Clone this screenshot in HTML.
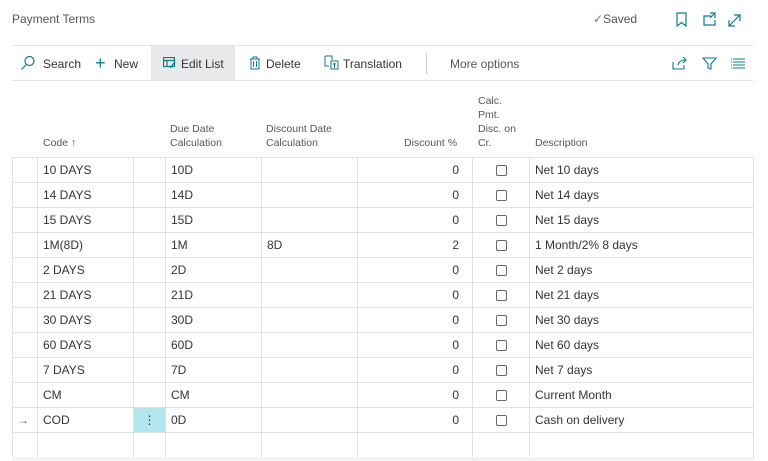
<!DOCTYPE html>
<html><head><meta charset="utf-8"><style>
*{margin:0;padding:0;box-sizing:border-box}
body{width:768px;height:461px;background:#fff;font-family:"Liberation Sans",sans-serif;color:#333;position:relative;overflow:hidden;font-size:12px}
.abs{position:absolute}
.t{position:absolute;white-space:nowrap}
table{position:absolute;left:12px;top:157px;border-collapse:collapse;font-size:12px;color:#333}
td{border:1px solid #e0e0e0;height:25px;padding:0 5px;white-space:nowrap}
td.n{text-align:right;padding-right:13px}
.h{color:#555;font-size:10.5px;line-height:14px}
.cb{display:inline-block;width:11px;height:11px;border:1px solid #666;border-radius:2px;vertical-align:middle}
</style></head><body>
<div class="t" style="left:12px;top:12px;font-size:12px;color:#555">Payment Terms</div>
<div class="t" style="left:593px;top:12px;font-size:12px;color:#555"><span style="color:#777">✓</span>Saved</div>
<svg class="abs" style="left:675px;top:12px" width="80" height="16" viewBox="0 0 80 16" fill="none" stroke="#0f7b8c" stroke-width="1.2">
<path d="M2 1h9v13l-4.5-3.5L2 14z"/>
<path d="M36 4h-7v9h11V8M35 1h5v5M40 1l-5 5"/>
<path d="M54 14L65 3M59 3h6v6M54 8v6h6"/>
</svg>
<div class="abs" style="left:12px;top:45px;width:741px;height:1px;background:#e5e5e5"></div>
<div class="abs" style="left:12px;top:80px;width:741px;height:1px;background:#e5e5e5"></div>
<div class="abs" style="left:151px;top:46px;width:84px;height:34px;background:#e8e9ea"></div>
<div class="abs" style="left:426px;top:53px;width:1px;height:21px;background:#ccc"></div>
<svg class="abs" style="left:20px;top:55px" width="16" height="16" viewBox="0 0 16 16" fill="none" stroke="#0f7b8c" stroke-width="1.2"><circle cx="9.5" cy="6" r="4.5"/><path d="M6.5 9.5L1.5 14.5"/></svg>
<div class="t" style="left:43px;top:57px;font-size:12px">Search</div>
<div class="t" style="left:95px;top:53px;font-size:18px;color:#0f7b8c;line-height:20px;font-weight:300">+</div>
<div class="t" style="left:114px;top:57px;font-size:12px">New</div>
<svg class="abs" style="left:163px;top:57px" width="14" height="12" viewBox="0 0 14 12" fill="none" stroke="#0f7b8c" stroke-width="1.2"><rect x="0.5" y="0.5" width="11" height="9"/><path d="M0.5 3.5h11M4 3.5v6M7 11l5-6"/></svg>
<div class="t" style="left:181px;top:57px;font-size:12px">Edit List</div>
<svg class="abs" style="left:249px;top:56px" width="12" height="14" viewBox="0 0 12 14" fill="none" stroke="#0f7b8c" stroke-width="1"><path d="M1 3h10M4 3V1h4v2M2 3v10h8V3M4.5 5v6M7.5 5v6"/></svg>
<div class="t" style="left:266px;top:57px;font-size:12px">Delete</div>
<svg class="abs" style="left:324px;top:55px" width="15" height="15" viewBox="0 0 15 15" fill="none" stroke="#0f7b8c" stroke-width="1"><path d="M1 1h7v4M1 1v10h4"/><path d="M7 6h7v8H7z"/><path d="M9 9h3M10.5 8v5"/></svg>
<div class="t" style="left:343px;top:57px;font-size:12px">Translation</div>
<div class="t" style="left:450px;top:57px;font-size:12px;color:#555">More options</div>
<svg class="abs" style="left:672px;top:56px" width="75" height="15" viewBox="0 0 75 15" fill="none" stroke="#0f7b8c" stroke-width="1.1">
<path d="M1 6v7h11V9M6 9c1-4 4-5 8-5M11 1l3 3-3 3"/>
<path d="M31 2h13l-5 6v5l-3-1V8z"/>
<path d="M61 3h12M61 6h12M61 9h12M61 12h12M59 3h1M59 6h1M59 9h1M59 12h1"/>
</svg>
<div class="t h" style="left:43px;top:136px">Code ↑</div>
<div class="t h" style="left:170px;top:122px">Due Date<br>Calculation</div>
<div class="t h" style="left:266px;top:122px">Discount Date<br>Calculation</div>
<div class="t h" style="left:404px;top:136px">Discount %</div>
<div class="t h" style="left:478px;top:94px">Calc.<br>Pmt.<br>Disc. on<br>Cr.</div>
<div class="t h" style="left:535px;top:136px">Description</div>
<table>
<colgroup><col style="width:25px"><col style="width:96px"><col style="width:32px"><col style="width:96px"><col style="width:96px"><col style="width:115px"><col style="width:57px"><col style="width:224px"></colgroup>
<tr><td></td><td>10 DAYS</td><td></td><td>10D</td><td></td><td class="n">0</td><td style="text-align:center"><span class="cb"></span></td><td>Net 10 days</td></tr>
<tr><td></td><td>14 DAYS</td><td></td><td>14D</td><td></td><td class="n">0</td><td style="text-align:center"><span class="cb"></span></td><td>Net 14 days</td></tr>
<tr><td></td><td>15 DAYS</td><td></td><td>15D</td><td></td><td class="n">0</td><td style="text-align:center"><span class="cb"></span></td><td>Net 15 days</td></tr>
<tr><td></td><td>1M(8D)</td><td></td><td>1M</td><td>8D</td><td class="n">2</td><td style="text-align:center"><span class="cb"></span></td><td>1 Month/2% 8 days</td></tr>
<tr><td></td><td>2 DAYS</td><td></td><td>2D</td><td></td><td class="n">0</td><td style="text-align:center"><span class="cb"></span></td><td>Net 2 days</td></tr>
<tr><td></td><td>21 DAYS</td><td></td><td>21D</td><td></td><td class="n">0</td><td style="text-align:center"><span class="cb"></span></td><td>Net 21 days</td></tr>
<tr><td></td><td>30 DAYS</td><td></td><td>30D</td><td></td><td class="n">0</td><td style="text-align:center"><span class="cb"></span></td><td>Net 30 days</td></tr>
<tr><td></td><td>60 DAYS</td><td></td><td>60D</td><td></td><td class="n">0</td><td style="text-align:center"><span class="cb"></span></td><td>Net 60 days</td></tr>
<tr><td></td><td>7 DAYS</td><td></td><td>7D</td><td></td><td class="n">0</td><td style="text-align:center"><span class="cb"></span></td><td>Net 7 days</td></tr>
<tr><td></td><td>CM</td><td></td><td>CM</td><td></td><td class="n">0</td><td style="text-align:center"><span class="cb"></span></td><td>Current Month</td></tr>
<tr><td style="color:#666;padding:0 4px">→</td><td>COD</td><td style="background:#b3e5ec;text-align:center;color:#333">⋮</td><td>0D</td><td></td><td class="n">0</td><td style="text-align:center"><span class="cb"></span></td><td>Cash on delivery</td></tr>
<tr><td></td><td></td><td></td><td></td><td></td><td></td><td></td><td></td></tr>
</table>
<div class="abs" style="left:12px;top:457px;width:741px;height:4px;background:#f3f3f3"></div>
</body></html>
